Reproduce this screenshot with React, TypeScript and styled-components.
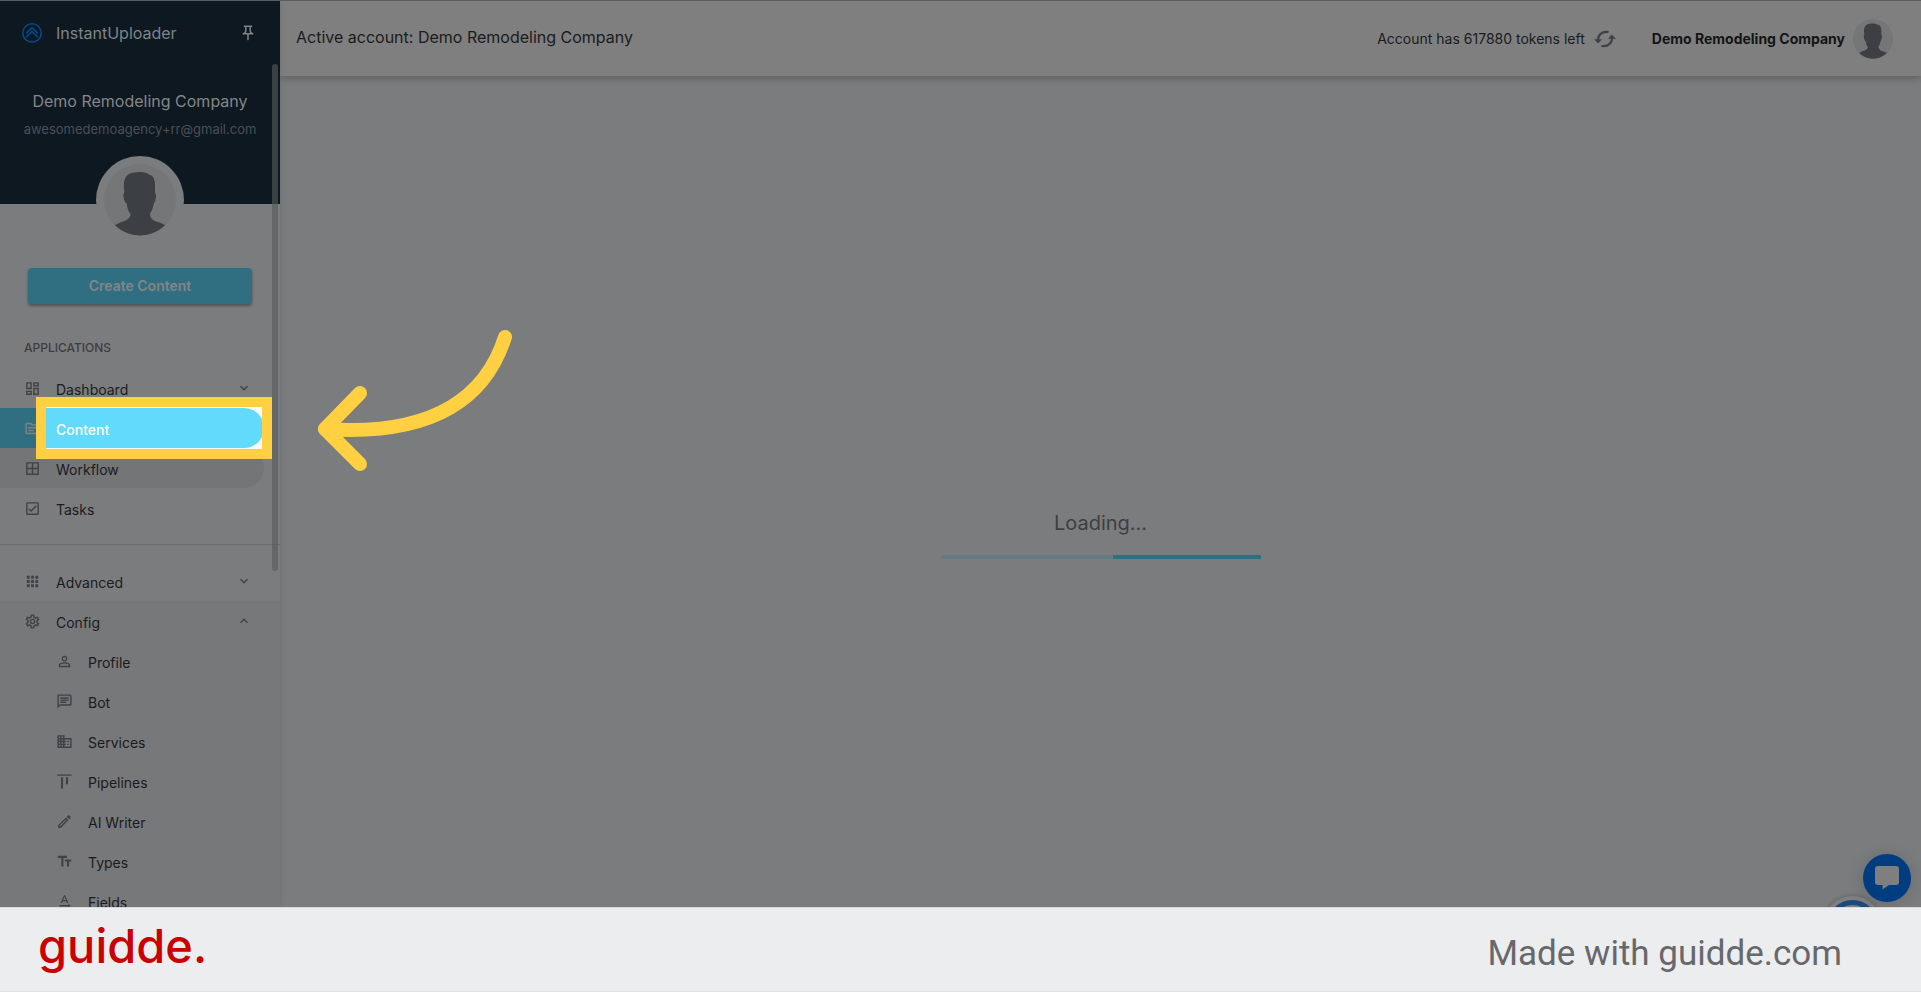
import React, { ReactNode } from "react";
import styled, { createGlobalStyle, css } from "styled-components";
import {
  MdAlignVerticalTop,
  MdApps,
  MdBorderAll,
  MdExpandLess,
  MdExpandMore,
  MdOutlineBusiness,
  MdOutlineChat,
  MdOutlineCheckBox,
  MdOutlineCreate,
  MdOutlineDashboard,
  MdOutlineSettings,
  MdOutlineSource,
  MdPersonOutline,
  MdOutlinePushPin,
  MdTextFields,
  MdTextRotationNone,
} from "react-icons/md";

const color = {
  navy: "#0d1820",
  panel: "#7b7c7e",
  bar: "#7f7f7f",
  text: "#1a1b1d",
  icon: "#3f4144",
  cyan: "#306f82",
  bright: "#61dafb",
  yellow: "#ffd042",
};

const GlobalStyle = createGlobalStyle`
  *, *::before, *::after { box-sizing: border-box; }
  body {
    margin: 0;
    background: ${color.panel};
    color: ${color.text};
    font-family: Inter, "Liberation Sans", sans-serif;
    font-size: 14px;
    line-height: 20px;
  }
  button { font: inherit; border: 0; padding: 0; background: none; color: inherit; }
  a { color: inherit; text-decoration: none; }
  h1, h2, p, ul { margin: 0; padding: 0; font-weight: 400; }
  ul { list-style: none; }
`;

const Page = styled.div`
  height: 100vh;
  display: flex;
  flex-direction: column;
  overflow: hidden;
`;

const Workspace = styled.div`
  position: relative;
  flex: 1;
  min-height: 0;
  display: flex;
  overflow: hidden;
  border-top: 1px solid #5c5c5d;
`;

const Sidebar = styled.aside`
  position: relative;
  z-index: 2;
  flex: none;
  width: 280px;
  overflow: hidden;
  background: ${color.panel};
  box-shadow: 0 0 6px rgba(0, 0, 0, 0.12);
`;

const Brand = styled.div`
  display: flex;
  align-items: center;
  gap: 14px;
  height: 63px;
  padding: 0 23px 0 22px;
  background: ${color.navy};
  color: #808488;
  font-size: 16px;
`;

const BrandName = styled.span`
  flex: 1;
`;

const PinButton = styled.button`
  display: flex;
  font-size: 18px;
`;

const Account = styled.div`
  display: flex;
  flex-direction: column;
  align-items: center;
  gap: 8px;
  height: 140px;
  padding-top: 27px;
  background: ${color.navy};
`;

const AccountName = styled.h2`
  color: #858688;
  font-size: 16px;
  line-height: 20px;
`;

const AccountMail = styled.p`
  color: #4b4f55;
  font-size: 13px;
  line-height: 20px;
`;

const AvatarRing = styled.div`
  width: 88px;
  height: 88px;
  margin: -48px auto 0;
  padding: 8px;
  border-radius: 50%;
  background: ${color.panel};
`;

const CreateButton = styled.button`
  display: block;
  width: 224px;
  height: 36px;
  margin: 24px auto 0;
  border-radius: 4px;
  background: ${color.cyan};
  box-shadow: 0 2px 3px rgba(0, 0, 0, 0.35);
  color: #838587;
  font-weight: 600;
`;

const GroupTitle = styled.h2`
  margin: 34px 24px 10px;
  color: #3b3d40;
  font-size: 12px;
  font-weight: 500;
  line-height: 20px;
`;

const NavLink = styled.a<{ $tone?: "active" | "hover"; $nested?: boolean }>`
  display: flex;
  align-items: center;
  height: 40px;
  margin-right: 16px;
  padding: 0 12px 0 ${(p) => (p.$nested ? 56 : 24)}px;
  border-radius: 0 20px 20px 0;
  ${(p) => p.$tone === "hover" && css`background: #747577;`}
  ${(p) => p.$tone === "active" && css`background: ${color.cyan}; color: #808284;`}
`;

const NavIcon = styled.span<{ $active?: boolean }>`
  display: flex;
  width: 32px;
  color: ${(p) => (p.$active ? "#808284" : color.icon)};
  font-size: 17px;
`;

const NavLabel = styled.span`
  flex: 1;
  padding-top: 3px;
`;

const Chevron = styled.span`
  display: flex;
  color: ${color.icon};
  font-size: 16px;
`;

const Divider = styled.hr`
  height: 1px;
  margin: 16px 0;
  border: 0;
  background: #6a6b6d;
`;

const OpenGroup = styled.div`
  background: #77787a;
`;

const ScrollThumb = styled.div`
  position: absolute;
  top: 63px;
  right: 2px;
  width: 6px;
  height: 507px;
  border-radius: 3px;
  background: rgba(86, 90, 88, 0.62);
`;

const Content = styled.div`
  flex: 1;
  min-width: 0;
  display: flex;
  flex-direction: column;
`;

const TopBar = styled.header`
  display: flex;
  align-items: center;
  height: 75px;
  padding: 0 28px 0 16px;
  background: ${color.bar};
  box-shadow: 0 2px 8px rgba(0, 0, 0, 0.25);
`;

const ActiveAccount = styled.h1`
  flex: 1;
  padding-bottom: 4px;
  font-size: 16px;
  line-height: 20px;
`;

const RefreshButton = styled.button`
  display: flex;
  margin: 0 36px 0 9px;
  color: ${color.icon};
`;

const UserButton = styled.button`
  display: flex;
  align-items: center;
  gap: 8px;
  color: #131415;
  font-weight: 700;
`;

const UserPhoto = styled.span`
  display: block;
  width: 40px;
  height: 40px;
`;

const Loader = styled.main`
  flex: 1;
  display: flex;
  flex-direction: column;
  align-items: center;
  justify-content: center;
  gap: 20px;
  padding-top: 86px;
  color: #3e3f40;
  font-size: 20px;
  line-height: 24px;
`;

const ProgressTrack = styled.div`
  display: flex;
  justify-content: flex-end;
  width: 320px;
  height: 4px;
  background: #647b83;
`;

const ProgressBar = styled.div`
  width: 46%;
  background: ${color.cyan};
`;

const Spotlight = styled.div`
  position: absolute;
  z-index: 3;
  top: 396px;
  left: 36px;
  width: 236px;
  height: 62px;
  overflow: hidden;
  border: 10px solid ${color.yellow};
  background: #f8f9fb;
`;

const SpotlightItem = styled.div`
  display: flex;
  align-items: center;
  width: 218px;
  height: 40px;
  margin-top: 1px;
  padding: 3px 0 0 10px;
  border-radius: 0 20px 20px 0;
  background: ${color.bright};
  color: #fff;
  font-weight: 500;
`;

const Arrow = styled.svg`
  position: absolute;
  z-index: 3;
  top: 310px;
  left: 300px;
`;

const ChatButton = styled.button`
  position: absolute;
  right: 10px;
  bottom: 5px;
  display: flex;
  align-items: center;
  justify-content: center;
  width: 48px;
  height: 48px;
  border-radius: 50%;
  background: #003c80;
  box-shadow: 0 1px 16px rgba(0, 0, 0, 0.16);
`;

const HelpBadge = styled.div`
  position: absolute;
  right: 39px;
  bottom: -48px;
  width: 59px;
  height: 59px;
  padding: 4px;
  border-radius: 50%;
  background: #7f7f80;
  box-shadow: 0 0 5px rgba(0, 0, 0, 0.25);
  &::before {
    content: "";
    display: block;
    height: 100%;
    border: 5px solid #1d4a7c;
    border-radius: 50%;
  }
`;

const Footer = styled.footer`
  display: flex;
  flex: none;
  align-items: center;
  justify-content: space-between;
  height: 85px;
  padding: 0 79px 0 38px;
  border-top: 1px solid #d8d9db;
  border-bottom: 1px solid #dfe0e2;
  background: #ecedef;
`;

const Wordmark = styled.span`
  padding-bottom: 8px;
  color: #cb0000;
  font-size: 47px;
  font-weight: 500;
  line-height: 56px;
`;

const Credit = styled.a`
  padding-top: 8px;
  color: #66686b;
  font-family: Roboto, "Liberation Sans", sans-serif;
  font-size: 35px;
  line-height: 40px;
`;

function Portrait() {
  return (
    <svg viewBox="0 0 72 72" width="100%" height="100%" aria-hidden="true" display="block">
      <circle cx="36" cy="36" r="36" fill="#757678" />
      <path
        fill="#3c3f43"
        d="M11 61.300C15 58.500 19 58 22.500 56C25 54.500 26 53 26.800 50.500C24.500 48 23.300 44 22.600 39.500C20.500 38.500 19.500 34 19.300 30.500C20 29 20.500 29 20.300 27C18.500 17 21.500 9.500 30 8.600C36 7.500 42 7.600 45.500 11C50 11.500 51.500 17 51 24C50.900 27 51 29 51.900 30.500C52.200 34 51.400 38 49.800 39.500C49 43.500 48 47 46 49.500C46 53 47.300 55 50 56.500C54 58.300 58 58.600 61 61.300A36 36 0 0 1 11 61.300Z"
      />
    </svg>
  );
}

function BrandLogo() {
  return (
    <svg width="20" height="20" viewBox="0 0 20 20" fill="none" stroke="#004a8c" strokeWidth="1.600" aria-hidden="true">
      <circle cx="10" cy="10" r="9.200" />
      <path d="M4.200 10.200L10 4.600L15.800 10.200M4.200 14.200L10 8.600L15.800 14.200" />
    </svg>
  );
}

function RefreshIcon() {
  return (
    <svg width="22" height="18" viewBox="0 0 22 18" aria-hidden="true">
      <g fill="none" stroke="currentColor" strokeWidth="2.200">
        <path d="M4 11C3.500 5 8 .8 14.500 2.200" />
        <path d="M18 7C18.500 13 14 17.200 7.500 15.800" />
      </g>
      <path fill="currentColor" d="M0 9.200H8L4.200 13.400ZM14 8.800H22L17.800 4.600Z" />
    </svg>
  );
}

type ItemProps = {
  icon: ReactNode;
  label: string;
  tone?: "active" | "hover";
  nested?: boolean;
  chevron?: "up" | "down";
};

function NavItem({ icon, label, tone, nested, chevron }: ItemProps) {
  return (
    <li>
      <NavLink href="#" aria-label={label} $tone={tone} $nested={nested}>
        <NavIcon $active={tone === "active"}>{icon}</NavIcon>
        <NavLabel>{tone === "active" ? null : label}</NavLabel>
        {chevron && <Chevron>{chevron === "up" ? <MdExpandLess /> : <MdExpandMore />}</Chevron>}
      </NavLink>
    </li>
  );
}

const configItems: ItemProps[] = [
  { icon: <MdPersonOutline />, label: "Profile" },
  { icon: <MdOutlineChat />, label: "Bot" },
  { icon: <MdOutlineBusiness />, label: "Services" },
  { icon: <MdAlignVerticalTop />, label: "Pipelines" },
  { icon: <MdOutlineCreate />, label: "AI Writer" },
  { icon: <MdTextFields />, label: "Types" },
  { icon: <MdTextRotationNone />, label: "Fields" },
];

export default function App() {
  return (
    <Page>
      <GlobalStyle />
      <Workspace>
        <Sidebar>
          <Brand>
            <BrandLogo />
            <BrandName>InstantUploader</BrandName>
            <PinButton aria-label="Pin sidebar">
              <MdOutlinePushPin />
            </PinButton>
          </Brand>
          <Account>
            <AccountName>Demo Remodeling Company</AccountName>
            <AccountMail>awesomedemoagency+rr@gmail.com</AccountMail>
          </Account>
          <AvatarRing>
            <Portrait />
          </AvatarRing>
          <CreateButton>Create Content</CreateButton>
          <nav>
            <GroupTitle>APPLICATIONS</GroupTitle>
            <ul>
              <NavItem icon={<MdOutlineDashboard />} label="Dashboard" chevron="down" />
              <NavItem icon={<MdOutlineSource />} label="Content" tone="active" />
              <NavItem icon={<MdBorderAll />} label="Workflow" tone="hover" />
              <NavItem icon={<MdOutlineCheckBox />} label="Tasks" />
            </ul>
            <Divider />
            <ul>
              <NavItem icon={<MdApps />} label="Advanced" chevron="down" />
            </ul>
            <OpenGroup>
              <ul>
                <NavItem icon={<MdOutlineSettings />} label="Config" chevron="up" />
                {configItems.map((item) => (
                  <NavItem key={item.label} {...item} nested />
                ))}
              </ul>
            </OpenGroup>
          </nav>
          <ScrollThumb />
        </Sidebar>
        <Content>
          <TopBar>
            <ActiveAccount>Active account: Demo Remodeling Company</ActiveAccount>
            <span>Account has 617880 tokens left</span>
            <RefreshButton aria-label="Refresh tokens">
              <RefreshIcon />
            </RefreshButton>
            <UserButton>
              Demo Remodeling Company
              <UserPhoto>
                <Portrait />
              </UserPhoto>
            </UserButton>
          </TopBar>
          <Loader>
            <p>Loading...</p>
            <ProgressTrack>
              <ProgressBar />
            </ProgressTrack>
          </Loader>
        </Content>
        <Spotlight>
          <SpotlightItem>Content</SpotlightItem>
        </Spotlight>
        <Arrow width="240" height="180" viewBox="0 0 240 180" fill="none" stroke={color.yellow} strokeWidth="14" strokeLinecap="round" strokeLinejoin="round" aria-hidden="true">
          <path d="M205 26C184 92 126 125 25 118" />
          <path d="M60 82L25 118L60 153" />
        </Arrow>
        <HelpBadge />
        <ChatButton aria-label="Open chat">
          <svg width="24" height="24" viewBox="0 0 24 24" fill="#7f7f7f" aria-hidden="true">
            <path d="M3 0H21Q24 0 24 3V16Q24 19 21 19H14L7.500 23.500V19H3Q0 19 0 16V3Q0 0 3 0Z" />
          </svg>
        </ChatButton>
      </Workspace>
      <Footer>
        <Wordmark>guidde.</Wordmark>
        <Credit href="#">Made with guidde.com</Credit>
      </Footer>
    </Page>
  );
}
